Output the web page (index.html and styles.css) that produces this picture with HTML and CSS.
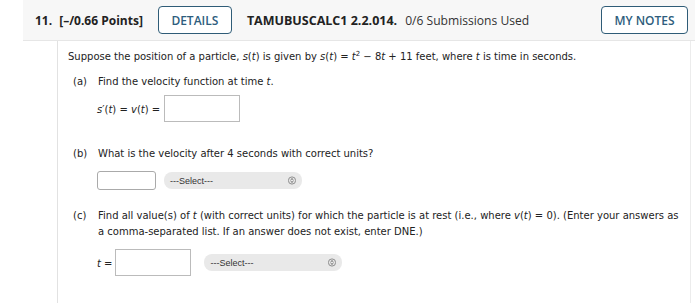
FILE: index.html
```html
<!DOCTYPE html>
<html>
<head>
<meta charset="utf-8">
<link rel="stylesheet" href="styles.css">
</head>
<body>
<div class="question">
  <div class="header">
    <span class="num">11.</span>
    <span class="points">[–/0.66 Points]</span>
    <span class="btn details">DETAILS</span>
    <span class="code">TAMUBUSCALC1 2.2.014.</span>
    <span class="subs">0/6 Submissions Used</span>
    <span class="btn notes">MY NOTES</span>
  </div>
  <div class="body">
    <p class="intro">Suppose the position of a particle, <i>s</i>(<i>t</i>) is given by <i>s</i>(<i>t</i>) = <i>t</i><sup>2</sup> − 8<i>t</i> + 11 feet, where <i>t</i> is time in seconds.</p>
    <div class="part part-a">
      <div class="qline"><span class="lbl">(a)</span><span>Find the velocity function at time <i>t</i>.</span></div>
      <div class="answer ans-a"><span class="eq"><i>s</i>′(<i>t</i>) = <i>v</i>(<i>t</i>) = </span><span class="box big"></span></div>
    </div>
    <div class="part part-b">
      <div class="qline"><span class="lbl">(b)</span><span>What is the velocity after 4 seconds with correct units?</span></div>
      <div class="answer ans-b"><span class="box small"></span><span class="select sel-b">---Select---<svg class="chev" width="8" height="9" viewBox="0 0 8 9"><circle cx="4" cy="4.5" r="3.6" fill="none" stroke="#777" stroke-width="0.8"/><path d="M2.6 3.9 L4 2.6 L5.4 3.9 M2.6 5.1 L4 6.4 L5.4 5.1" fill="none" stroke="#555" stroke-width="0.9"/></svg></span></div>
    </div>
    <div class="part part-c">
      <div class="qline"><span class="lbl">(c)</span><span class="txt">Find all value(s) of <i>t</i> (with correct units) for which the particle is at rest (i.e., where <i>v</i>(<i>t</i>) = 0). (Enter your answers as a comma-separated list. If an answer does not exist, enter DNE.)</span></div>
      <div class="answer ans-c"><span class="eq"><i>t</i> = </span><span class="box big"></span><span class="select sel-c">---Select---<svg class="chev" width="8" height="9" viewBox="0 0 8 9"><circle cx="4" cy="4.5" r="3.6" fill="none" stroke="#777" stroke-width="0.8"/><path d="M2.6 3.9 L4 2.6 L5.4 3.9 M2.6 5.1 L4 6.4 L5.4 5.1" fill="none" stroke="#555" stroke-width="0.9"/></svg></span></div>
    </div>
  </div>
</div>
</body>
</html>
```
FILE: styles.css
```css
html, body { margin: 0; padding: 0; background: #fff; }
body { width: 700px; height: 303px; overflow: hidden; }
.question { padding-left: 23px; width: 672px; }
.header {
  display: flex; align-items: center;
  height: 41px; box-sizing: border-box;
  background: #f7f7f7; border-bottom: 1px solid #e6e6e6;
  font-family: "Open Sans", sans-serif; font-size: 12px; color: #222;
  padding-left: 12px;
}
.num { font-weight: 700; margin-right: 7px; }
.points { font-weight: 700; margin-right: 15px; }
.btn {
  display: inline-flex; align-items: center; justify-content: center;
  box-sizing: border-box; height: 28px;
  border: 1.5px solid #2f5c77; border-radius: 4px; background: #fff;
  color: #2e5d7d; font-weight: 600; font-size: 12px;
}
.details { width: 74px; margin-right: 15px; }
.code { font-weight: 700; margin-right: 8px; font-size: 12.5px; }
.subs { font-weight: 400; color: #333; font-size: 12.1px; }
.notes { width: 87px; margin-left: auto; margin-right: 7px; }
.body {
  margin-left: 34px; width: 634px; box-sizing: border-box;
  border-left: 1px solid #e2e2e2; border-right: 1px solid #ececec;
  height: 262px; padding-left: 10px; padding-right: 6px;
  font-family: "DejaVu Sans", Verdana, sans-serif; font-size: 10px; color: #222;
}
.body p { margin: 0; }
.intro { padding-top: 9px; line-height: 13px; }
sup { font-size: 7px; line-height: 0; vertical-align: 4px; }
.qline { display: flex; line-height: 16px; }
.lbl { width: 30px; flex: none; padding-left: 5px; box-sizing: border-box; }
.part-a { margin-top: 11px; }
.answer { display: flex; align-items: center; padding-left: 29px; }
.ans-a { margin-top: 5px; }
.eq { margin-right: 4px; line-height: 16px; padding-top: 2px; }
.box { display: inline-block; box-sizing: border-box; border: 1px solid #bbb; background: #fff; }
.box.big { width: 76px; height: 27px; }
.box.small { width: 59px; height: 19px; border-radius: 3px; border-color: #aaa; }
.part-b { margin-top: 24px; }
.ans-b { margin-top: 9px; }
.select {
  display: inline-flex; align-items: center; justify-content: space-between;
  box-sizing: border-box; height: 17px; border-radius: 8px;
  background: #e9e9e9; padding: 0 6px 0 6px;
  font-family: "Liberation Sans", Arial, sans-serif; font-size: 9px; color: #333;
}
.sel-b { width: 138px; margin-left: 8px; }
.sel-c { width: 138px; margin-left: 13px; }
.part-c { margin-top: 18px; }
.part-c .qline { line-height: 16px; }
.ans-c { margin-top: 9px; }
.ans-c .eq { margin-right: 3px; }
```
